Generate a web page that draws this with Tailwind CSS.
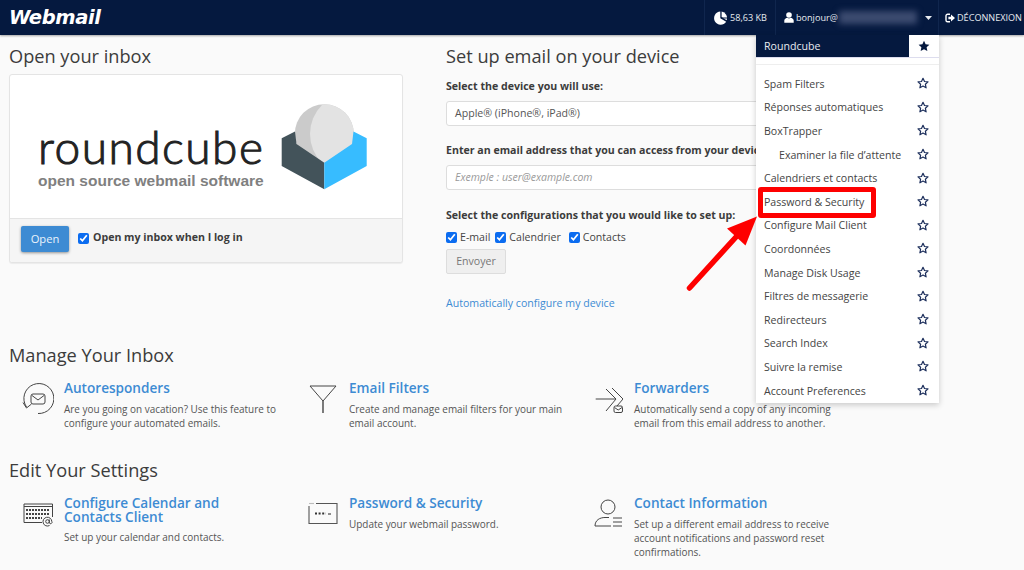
<!DOCTYPE html>
<html lang="fr">
<head>
<meta charset="utf-8">
<title>Webmail</title>
<script src="https://cdn.jsdelivr.net/npm/@tailwindcss/browser@4"></script>
</head>
<body class="bg-[#fafafa] font-['Open_Sans',sans-serif] text-[#3c3c3c] h-[570px] w-[1024px] overflow-hidden relative">
<header class="h-[35px] bg-[#05193f] shadow-[0_1px_2px_rgba(0,0,0,0.35)] flex items-center text-[#e8ebf0] text-[9.1px] whitespace-nowrap">
  <div class="pl-[9px] font-['DejaVu_Sans',sans-serif] font-bold italic text-[19.5px] tracking-[-0.4px] text-white flex-1 leading-[35px]">Webmail</div>
  <div class="h-full flex items-center pl-[9px] pr-[9px] border-l border-[#10264e] gap-[2px] w-[71px]">
    <svg class="w-[14px] h-[14px] shrink-0" viewBox="0 0 14 14"><path d="M6.3 0.6A6.6 6.6 0 1 0 12.2 10.8L6.3 7.2Z" fill="#fff"/><path d="M7.6 0.4V6.1L12.6 9.2A6.6 6.6 0 0 0 7.6 0.4Z" fill="#fff"/><path d="M7 7L14 7" stroke="#05193f" stroke-width="1"/></svg>
    <span>58,63 KB</span>
  </div>
  <div class="h-full flex items-center pl-[8px] border-l border-[#10264e] w-[163px]">
    <svg class="w-[10px] h-[11px]" viewBox="0 0 10 11"><circle cx="5" cy="3" r="2.8" fill="#fff"/><path d="M0.3 10.7V8.6C0.3 6.9 2 6 3.3 5.7L5 6.6L6.7 5.7C8 6 9.7 6.9 9.7 8.6V10.7Z" fill="#fff"/></svg>
    <span class="ml-[2px]">bonjour@</span>
    <span class="ml-[1px] w-[78px] h-[13px] bg-[#3c4b70] blur-[3px]"></span>
    <svg class="ml-[8px] w-[7px] h-[4px]" viewBox="0 0 7 4"><path d="M0 0H7L3.5 4Z" fill="#e8ebf0"/></svg>
  </div>
  <div class="h-full flex items-center pl-[6px] border-l border-[#10264e] w-[86px] gap-[2px]">
    <svg class="w-[10px] h-[10px]" viewBox="0 0 10 10"><path d="M5 1.2H2.6A1.6 1.6 0 0 0 1 2.8V7.2A1.6 1.6 0 0 0 2.6 8.8H5" fill="none" stroke="#fff" stroke-width="1.4"/><path d="M3.4 3.8H6V1.6L10 5L6 8.4V6.2H3.4Z" fill="#fff"/></svg>
    <span>DÉCONNEXION</span>
  </div>
</header>

<main class="pt-[8px] px-[9px]">
  <div class="flex h-[298px]">
    <section class="w-[394px]">
      <h2 class="text-[18.2px] leading-[26px] mb-[5px]">Open your inbox</h2>
      <div class="h-[189px] border border-[#e4e4e4] rounded-[3px] bg-white shadow-[0_1px_1px_rgba(0,0,0,0.06)] flex flex-col">
        <div class="h-[143px] relative flex items-center">
          <div class="ml-[28px] w-[226px] mt-[21px]">
            <div class="font-['Lato',sans-serif] font-light text-[46px] leading-[44px] text-[#222] tracking-[1.5px] [-webkit-text-stroke:1px_#222]">roundcube</div>
            <div class="mt-[3px] font-['Liberation_Sans',sans-serif] font-bold text-[15.5px] leading-[18px] text-[#808080] whitespace-nowrap">open source webmail software</div>
          </div>
          <svg class="absolute left-[262px] top-[20px] w-[100px] h-[100px]" viewBox="272 95 100 100">
            <defs><clipPath id="sp"><circle cx="324.3" cy="133.7" r="29.5"/></clipPath></defs>
            <circle cx="324.3" cy="133.7" r="29.5" fill="#cbcbcb"/>
            <circle cx="351" cy="134" r="41" fill="#e3e3e3" clip-path="url(#sp)"/>
            <path d="M281.7 138.3L295 131.5L296.5 144L324.3 162.7V189.3L281.7 166Z" fill="#43535a"/>
            <path d="M366.7 138.3L353.5 131.5L352 144L324.3 162.7V189.3L366.7 166Z" fill="#37bcff"/>
          </svg>
        </div>
        <div class="flex-1 bg-[#f5f5f5] border-t border-[#e4e4e4] rounded-b-[3px] flex items-start pl-[11px] pt-[7px]">
          <button class="w-[48px] h-[26px] rounded-[2px] bg-[#3d8bd3] text-[#eaf3fb] text-[11.2px] shadow-[0_1px_3px_rgba(0,0,0,0.4)]">Open</button>
          <label class="flex items-center ml-[9px] mt-[1px] h-[22px] font-bold text-[10.6px]">
            <input type="checkbox" checked class="w-[11px] h-[11px] accent-[#0b6cf0] m-0 mr-[4px]"><span>Open my inbox when I log in</span>
          </label>
        </div>
      </div>
    </section>
    <section class="ml-[43px] w-[360px]">
      <h2 class="text-[18.2px] leading-[26px] mb-[10px]">Set up email on your device</h2>
      <div class="font-bold text-[10.6px] leading-[15px] mb-[7px]">Select the device you will use:</div>
      <div class="h-[25px] border border-[#ddd] rounded-[3px] bg-white text-[10.6px] leading-[23px] pl-[8px] text-[#555] mb-[17px]">Apple® (iPhone®, iPad®)</div>
      <div class="font-bold text-[10.6px] leading-[15px] mb-[7px] whitespace-nowrap">Enter an email address that you can access from your device:</div>
      <div class="h-[25px] border border-[#ddd] rounded-[3px] bg-white text-[10.5px] leading-[23px] pl-[8px] italic text-[#999] mb-[18px]">Exemple : user@example.com</div>
      <div class="font-bold text-[10.6px] leading-[15px] mb-[7px]">Select the configurations that you would like to set up:</div>
      <div class="flex items-center h-[15px] text-[10.6px] text-[#444] mb-[4px]">
        <label class="flex items-center mr-[5px]"><input type="checkbox" checked class="w-[11px] h-[11px] accent-[#0b6cf0] m-0 mr-[3px]">E-mail</label>
        <label class="flex items-center mr-[8px]"><input type="checkbox" checked class="w-[11px] h-[11px] accent-[#0b6cf0] m-0 mr-[3px]">Calendrier</label>
        <label class="flex items-center"><input type="checkbox" checked class="w-[11px] h-[11px] accent-[#0b6cf0] m-0 mr-[3px]">Contacts</label>
      </div>
      <button class="block w-[60px] h-[25px] bg-[#efefef] border border-[#ddd] rounded-[2px] text-[10.6px] text-[#777]">Envoyer</button>
      <a class="block mt-[22px] text-[10.6px] leading-[15px] text-[#3d8bd3]">Automatically configure my device</a>
    </section>
  </div>

  <h2 class="text-[18.2px] leading-[28px] mb-[12px]">Manage Your Inbox</h2>
  <div class="grid grid-cols-[285px_285px_285px] h-[75px]">
    <article class="flex">
      <div class="w-[55px] pl-[13px] pt-[2px]">
        <svg class="w-[32px] h-[32px]" viewBox="0 0 32 32" fill="none" stroke="#444" stroke-width="1"><path d="M4.5 24A15 15 0 1 1 16 30.5" /><path d="M1 19.5L4.5 25L9.5 21"/><rect x="9" y="11" width="14" height="10" rx="2"/><path d="M10 12.5L16 17L22 12.5"/></svg>
      </div>
      <div class="w-[218px]">
        <h3 class="text-[#3d8bd3] font-semibold text-[13.6px] leading-[14px] mb-[7px]">Autoresponders</h3>
        <p class="text-[9.95px] leading-[14px] text-[#555]">Are you going on vacation? Use this feature to configure your automated emails.</p>
      </div>
    </article>
    <article class="flex">
      <div class="w-[55px] pl-[15px] pt-[4px]">
        <svg class="w-[28px] h-[28px]" viewBox="0 0 28 28" fill="none" stroke="#444" stroke-width="1"><path d="M1 1H27L14 16Z"/><path d="M14 16V28" stroke-width="1.4"/></svg>
      </div>
      <div class="w-[218px]">
        <h3 class="text-[#3d8bd3] font-semibold text-[13.6px] leading-[14px] mb-[7px]">Email Filters</h3>
        <p class="text-[9.95px] leading-[14px] text-[#555]">Create and manage email filters for your main email account.</p>
      </div>
    </article>
    <article class="flex">
      <div class="w-[55px] pl-[16px] pt-[7px]">
        <svg class="w-[28px] h-[25px]" viewBox="0 0 28 25" fill="none" stroke="#444" stroke-width="1"><path d="M0.7 11H21"/><path d="M11 1L21 11L11 23"/><path d="M17 0L28 11L22 18"/><rect x="19" y="18" width="8.5" height="6.5" rx="1.5" fill="#fafafa"/><path d="M19.5 19.5L23.2 22L27 19.5"/></svg>
      </div>
      <div class="w-[218px]">
        <h3 class="text-[#3d8bd3] font-semibold text-[13.6px] leading-[14px] mb-[7px]">Forwarders</h3>
        <p class="text-[9.95px] leading-[14px] text-[#555]">Automatically send a copy of any incoming email from this email address to another.</p>
      </div>
    </article>
  </div>

  <h2 class="text-[18.2px] leading-[28px] mb-[12px]">Edit Your Settings</h2>
  <div class="grid grid-cols-[285px_285px_285px]">
    <article class="flex">
      <div class="w-[55px] pl-[14px] pt-[7px]">
        <svg class="w-[30px] h-[24px]" viewBox="0 0 30 24" fill="none" stroke="#444" stroke-width="1"><path d="M19 19.5H1V1H29.5V14"/><path d="M1 3.5H29.5"/><path d="M3 7H27M3 11H27M3 15H19" stroke-width="2" stroke-dasharray="2 1"/><circle cx="24.5" cy="18.5" r="5.5" fill="#fafafa" stroke="none"/><circle cx="24.5" cy="18.5" r="1.8"/><path d="M26.3 16.5V20A1.2 1.2 0 0 0 28.8 18.5A4.4 4.4 0 1 0 26.5 22.5"/></svg>
      </div>
      <div class="w-[218px]">
        <h3 class="text-[#3d8bd3] font-semibold text-[13.6px] leading-[14px] mb-[6px] max-w-[170px]">Configure Calendar and Contacts Client</h3>
        <p class="text-[9.95px] leading-[14px] text-[#555]">Set up your calendar and contacts.</p>
      </div>
    </article>
    <article class="flex">
      <div class="w-[55px] pl-[14px] pt-[6px]">
        <svg class="w-[30px] h-[23px]" viewBox="0 0 30 23" fill="none" stroke="#555" stroke-width="1.1"><path d="M1 4V21.5H29V1.5H8"/><path d="M1 1.5H6" stroke="#bbb"/><path d="M7 11.5H18" stroke="#333" stroke-width="2" stroke-dasharray="2 1.6"/><path d="M20 12H23" stroke="#333"/></svg>
      </div>
      <div class="w-[218px]">
        <h3 class="text-[#3d8bd3] font-semibold text-[13.6px] leading-[14px] mb-[7px]">Password &amp; Security</h3>
        <p class="text-[9.95px] leading-[14px] text-[#555]">Update your webmail password.</p>
      </div>
    </article>
    <article class="flex">
      <div class="w-[55px] pl-[15px] pt-[3px]">
        <svg class="w-[28px] h-[28px]" viewBox="0 0 28 28" fill="none" stroke="#444" stroke-width="1"><circle cx="14" cy="8" r="7"/><path d="M1 27C1 21 6 18.5 11 18.5H15"/><path d="M1 27H17"/><path d="M19 19H28M19 23H28M19 27H28"/></svg>
      </div>
      <div class="w-[218px]">
        <h3 class="text-[#3d8bd3] font-semibold text-[13.6px] leading-[14px] mb-[7px]">Contact Information</h3>
        <p class="text-[9.95px] leading-[14px] text-[#555]">Set up a different email address to receive account notifications and password reset confirmations.</p>
      </div>
    </article>
  </div>
</main>

<nav class="absolute left-[756px] top-[35px] w-[183px] h-[368px] bg-white shadow-[0_2px_6px_rgba(0,0,0,0.2)] text-[10.6px] text-[#444]">
  <div class="flex h-[23px] border-b border-[#dde] ">
    <div class="w-[153px] bg-[#05193f] text-[#e8ebf0] pl-[8px] leading-[23px]">Roundcube</div>
    <div class="flex-1 flex items-center justify-center -mt-[1px]"><svg class="w-[12px] h-[12px]" viewBox="0 0 24 24"><path d="M12 1.5L15.2 8.4L22.8 9.3L17.2 14.5L18.7 22L12 18.3L5.3 22L6.8 14.5L1.2 9.3L8.8 8.4Z" fill="#05193f"/></svg></div>
  </div>
  <div class="mt-[6px] border-t border-[#eee] pt-[8px]">
    <div class="flex h-[23.6px] items-center justify-between pl-[8px] pr-[10px]"><span>Spam Filters</span><svg class="w-[12px] h-[12px] -mt-[3px]" viewBox="0 0 24 24"><path d="M12 2.5L15 9L22 9.8L16.8 14.6L18.2 21.6L12 18.1L5.8 21.6L7.2 14.6L2 9.8L9 9Z" fill="none" stroke="#1d2f5c" stroke-width="2.4" stroke-linejoin="round"/></svg></div>
    <div class="flex h-[23.6px] items-center justify-between pl-[8px] pr-[10px]"><span>Réponses automatiques</span><svg class="w-[12px] h-[12px] -mt-[3px]" viewBox="0 0 24 24"><path d="M12 2.5L15 9L22 9.8L16.8 14.6L18.2 21.6L12 18.1L5.8 21.6L7.2 14.6L2 9.8L9 9Z" fill="none" stroke="#1d2f5c" stroke-width="2.4" stroke-linejoin="round"/></svg></div>
    <div class="flex h-[23.6px] items-center justify-between pl-[8px] pr-[10px]"><span>BoxTrapper</span><svg class="w-[12px] h-[12px] -mt-[3px]" viewBox="0 0 24 24"><path d="M12 2.5L15 9L22 9.8L16.8 14.6L18.2 21.6L12 18.1L5.8 21.6L7.2 14.6L2 9.8L9 9Z" fill="none" stroke="#1d2f5c" stroke-width="2.4" stroke-linejoin="round"/></svg></div>
    <div class="flex h-[23.6px] items-center justify-between pl-[23px] pr-[10px]"><span>Examiner la file d’attente</span><svg class="w-[12px] h-[12px] -mt-[3px]" viewBox="0 0 24 24"><path d="M12 2.5L15 9L22 9.8L16.8 14.6L18.2 21.6L12 18.1L5.8 21.6L7.2 14.6L2 9.8L9 9Z" fill="none" stroke="#1d2f5c" stroke-width="2.4" stroke-linejoin="round"/></svg></div>
    <div class="flex h-[23.6px] items-center justify-between pl-[8px] pr-[10px]"><span>Calendriers et contacts</span><svg class="w-[12px] h-[12px] -mt-[3px]" viewBox="0 0 24 24"><path d="M12 2.5L15 9L22 9.8L16.8 14.6L18.2 21.6L12 18.1L5.8 21.6L7.2 14.6L2 9.8L9 9Z" fill="none" stroke="#1d2f5c" stroke-width="2.4" stroke-linejoin="round"/></svg></div>
    <div class="flex h-[23.6px] items-center justify-between pl-[8px] pr-[10px]"><span>Password &amp; Security</span><svg class="w-[12px] h-[12px] -mt-[3px]" viewBox="0 0 24 24"><path d="M12 2.5L15 9L22 9.8L16.8 14.6L18.2 21.6L12 18.1L5.8 21.6L7.2 14.6L2 9.8L9 9Z" fill="none" stroke="#1d2f5c" stroke-width="2.4" stroke-linejoin="round"/></svg></div>
    <div class="flex h-[23.6px] items-center justify-between pl-[8px] pr-[10px]"><span>Configure Mail Client</span><svg class="w-[12px] h-[12px] -mt-[3px]" viewBox="0 0 24 24"><path d="M12 2.5L15 9L22 9.8L16.8 14.6L18.2 21.6L12 18.1L5.8 21.6L7.2 14.6L2 9.8L9 9Z" fill="none" stroke="#1d2f5c" stroke-width="2.4" stroke-linejoin="round"/></svg></div>
    <div class="flex h-[23.6px] items-center justify-between pl-[8px] pr-[10px]"><span>Coordonnées</span><svg class="w-[12px] h-[12px] -mt-[3px]" viewBox="0 0 24 24"><path d="M12 2.5L15 9L22 9.8L16.8 14.6L18.2 21.6L12 18.1L5.8 21.6L7.2 14.6L2 9.8L9 9Z" fill="none" stroke="#1d2f5c" stroke-width="2.4" stroke-linejoin="round"/></svg></div>
    <div class="flex h-[23.6px] items-center justify-between pl-[8px] pr-[10px]"><span>Manage Disk Usage</span><svg class="w-[12px] h-[12px] -mt-[3px]" viewBox="0 0 24 24"><path d="M12 2.5L15 9L22 9.8L16.8 14.6L18.2 21.6L12 18.1L5.8 21.6L7.2 14.6L2 9.8L9 9Z" fill="none" stroke="#1d2f5c" stroke-width="2.4" stroke-linejoin="round"/></svg></div>
    <div class="flex h-[23.6px] items-center justify-between pl-[8px] pr-[10px]"><span>Filtres de messagerie</span><svg class="w-[12px] h-[12px] -mt-[3px]" viewBox="0 0 24 24"><path d="M12 2.5L15 9L22 9.8L16.8 14.6L18.2 21.6L12 18.1L5.8 21.6L7.2 14.6L2 9.8L9 9Z" fill="none" stroke="#1d2f5c" stroke-width="2.4" stroke-linejoin="round"/></svg></div>
    <div class="flex h-[23.6px] items-center justify-between pl-[8px] pr-[10px]"><span>Redirecteurs</span><svg class="w-[12px] h-[12px] -mt-[3px]" viewBox="0 0 24 24"><path d="M12 2.5L15 9L22 9.8L16.8 14.6L18.2 21.6L12 18.1L5.8 21.6L7.2 14.6L2 9.8L9 9Z" fill="none" stroke="#1d2f5c" stroke-width="2.4" stroke-linejoin="round"/></svg></div>
    <div class="flex h-[23.6px] items-center justify-between pl-[8px] pr-[10px]"><span>Search Index</span><svg class="w-[12px] h-[12px] -mt-[3px]" viewBox="0 0 24 24"><path d="M12 2.5L15 9L22 9.8L16.8 14.6L18.2 21.6L12 18.1L5.8 21.6L7.2 14.6L2 9.8L9 9Z" fill="none" stroke="#1d2f5c" stroke-width="2.4" stroke-linejoin="round"/></svg></div>
    <div class="flex h-[23.6px] items-center justify-between pl-[8px] pr-[10px]"><span>Suivre la remise</span><svg class="w-[12px] h-[12px] -mt-[3px]" viewBox="0 0 24 24"><path d="M12 2.5L15 9L22 9.8L16.8 14.6L18.2 21.6L12 18.1L5.8 21.6L7.2 14.6L2 9.8L9 9Z" fill="none" stroke="#1d2f5c" stroke-width="2.4" stroke-linejoin="round"/></svg></div>
    <div class="flex h-[23.6px] items-center justify-between pl-[8px] pr-[10px]"><span>Account Preferences</span><svg class="w-[12px] h-[12px] -mt-[3px]" viewBox="0 0 24 24"><path d="M12 2.5L15 9L22 9.8L16.8 14.6L18.2 21.6L12 18.1L5.8 21.6L7.2 14.6L2 9.8L9 9Z" fill="none" stroke="#1d2f5c" stroke-width="2.4" stroke-linejoin="round"/></svg></div>
  </div>
</nav>

<div class="absolute left-[758px] top-[187px] w-[118px] h-[31px] border-[5px] border-[#fe0000] rounded-[3px]"></div>
<svg class="absolute left-[680px] top-[210px] w-[85px] h-[85px]" viewBox="680 210 85 85"><path d="M689.5 288L736 237" stroke="#fe0000" stroke-width="5.5" stroke-linecap="round" fill="none"/><path d="M757 216.5L727 228.5L745.5 245.5Z" fill="#fe0000"/></svg>
</body>
</html>
